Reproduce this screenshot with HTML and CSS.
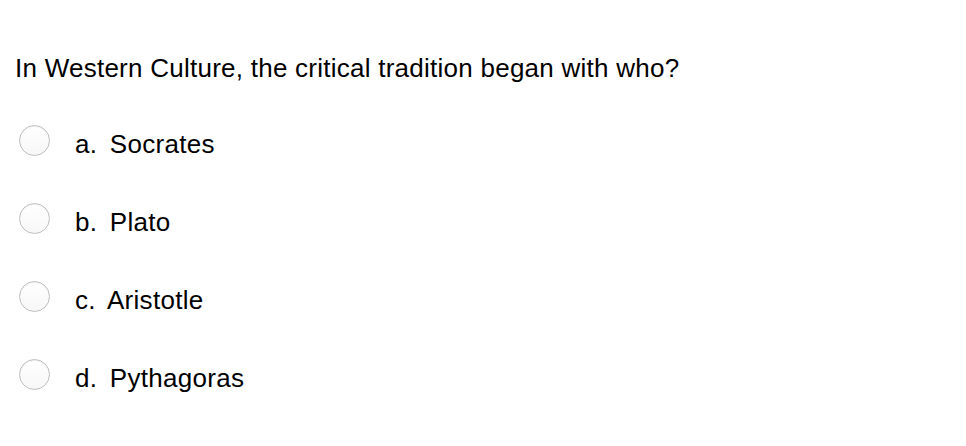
FILE: index.html
```html
<!DOCTYPE html>
<html lang="en">
<head>
<meta charset="utf-8">
<title>Question</title>
<link rel="stylesheet" href="styles.css">
</head>
<body>
<div class="quiz">
  <p class="question">In Western Culture, the critical tradition began with who?</p>
  <ul class="options">
    <li class="option"><span class="radio"></span><span class="label"><span class="letter">a.</span> Socrates</span></li>
    <li class="option"><span class="radio"></span><span class="label"><span class="letter">b.</span> Plato</span></li>
    <li class="option"><span class="radio"></span><span class="label"><span class="letter">c.</span> Aristotle</span></li>
    <li class="option"><span class="radio"></span><span class="label"><span class="letter">d.</span> Pythagoras</span></li>
  </ul>
</div>
</body>
</html>
```

FILE: styles.css
```css
html, body {
  margin: 0;
  padding: 0;
  background: #ffffff;
}

body {
  font-family: "Liberation Sans", Arial, sans-serif;
  color: #000000;
}

.quiz {
  padding: 53px 15px 0 15px;
}

.question {
  margin: 0;
  font-size: 26px;
  line-height: 30px;
  letter-spacing: 0.25px;
}

.options {
  list-style: none;
  margin: 0;
  padding: 18px 0 0 4px;
}

.option {
  display: flex;
  align-items: center;
  gap: 25px;
  height: 78px;
}

.radio {
  flex: none;
  width: 29px;
  height: 29px;
  border-radius: 50%;
  border: 1px solid #bfbfbf;
  background: linear-gradient(#ffffff, #f7f7f7);
  box-shadow: inset 0 1px 1px rgba(0, 0, 0, 0.06);
}

.label {
  font-size: 26px;
  line-height: 30px;
  letter-spacing: 0.3px;
  padding-top: 8px;
}

.letter {
  margin-right: 5px;
}
```
